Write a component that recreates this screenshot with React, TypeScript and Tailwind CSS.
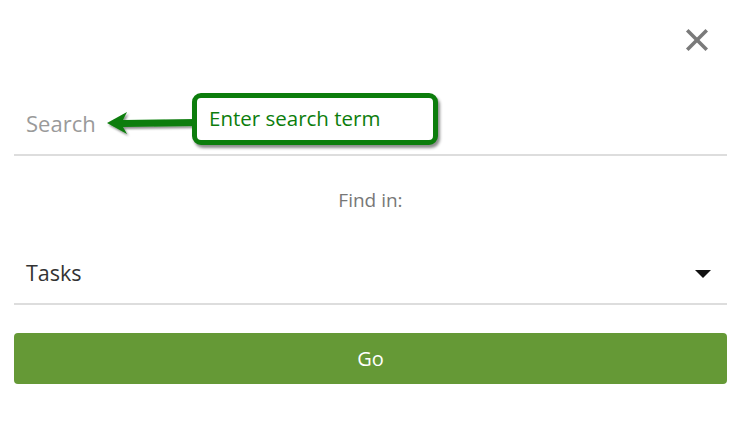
import { X } from "lucide-react";

export default function App() {
  return (
    <div className="relative w-[740px] h-[426px] bg-white pl-[14px] pr-[13px] font-['Open_Sans',sans-serif]">
      {/* Close */}
      <div className="h-[80px] flex justify-end items-start pt-[23px] pr-[13px]">
        <X className="w-[34px] h-[34px] text-[#7a7a7a]" strokeWidth={2.5} strokeLinecap="square" />
      </div>

      {/* Search field */}
      <div className="h-[76px] pt-[12px] flex items-center border-b-2 border-[#dddddd]">
        <span className="pl-[12px] text-[22px] text-[#9a9a9a]">Search</span>
      </div>

      {/* Callout */}
      <svg
        className="absolute left-[104px] top-[108px]"
        width="92"
        height="30"
        viewBox="0 0 92 30"
      >
        <defs>
          <filter id="sh" x="-10%" y="-30%" width="130%" height="180%">
            <feDropShadow dx="1.5" dy="2" stdDeviation="1.2" floodColor="#000" floodOpacity="0.45" />
          </filter>
        </defs>
        <polygon
          points="3,15 23,4 19,12 92,11 92,18 19,19 23,26"
          fill="#0c7d0c"
          filter="url(#sh)"
        />
      </svg>
      <div className="absolute left-[192px] top-[93px] w-[246px] h-[52px] border-[5px] border-[#0c7d0c] rounded-[9px] bg-white shadow-[2px_3px_3px_rgba(0,0,0,0.45)] flex items-center pl-[12px]">
        <span className="text-[20.5px] text-[#0c7d0c] leading-none pb-[1px]">Enter search term</span>
      </div>

      {/* Find in */}
      <div className="h-[88px] flex items-center justify-center">
        <span className="text-[19px] text-[#777777]">Find in:</span>
      </div>

      {/* Select */}
      <div className="h-[61px] flex items-center justify-between border-b-2 border-[#dddddd] pl-[12px] pr-[16px]">
        <span className="text-[21.5px] text-[#333333]">Tasks</span>
        <svg width="16" height="10" viewBox="0 0 16 10">
          <polygon points="0,1 16,1 8,9" fill="#111111" />
        </svg>
      </div>

      {/* Go */}
      <button className="mt-[28px] w-full h-[51px] rounded-[4px] bg-[#659936] text-white text-[20px] flex items-center justify-center">
        Go
      </button>
    </div>
  );
}
